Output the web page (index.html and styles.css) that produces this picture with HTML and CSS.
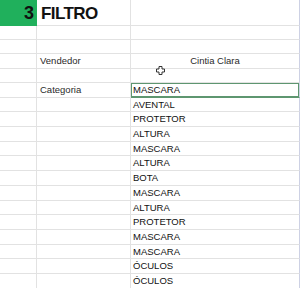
FILE: index.html
```html
<!DOCTYPE html>
<html>
<head>
<meta charset="utf-8">
<link rel="stylesheet" href="styles.css">
</head>
<body>
<div class="sheet">
  <div class="cell title-num">3</div>
  <div class="cell title-text">FILTRO</div>
  <div class="cell"></div>

  <div class="cell r14"></div><div class="cell r14"></div><div class="cell r14"></div>
  <div class="cell r14"></div><div class="cell r14"></div><div class="cell r14"></div>
  <div class="cell r15"></div><div class="cell r15 label">Vendedor</div><div class="cell r15 center">Cintia Clara</div>
  <div class="cell r14"></div><div class="cell r14"></div><div class="cell r14"></div>

  <div class="cell row"></div><div class="cell row label">Categoria</div><div class="cell row item sel">MASCARA</div>
  <div class="cell row"></div><div class="cell row"></div><div class="cell row item">AVENTAL</div>
  <div class="cell row"></div><div class="cell row"></div><div class="cell row item">PROTETOR</div>
  <div class="cell row"></div><div class="cell row"></div><div class="cell row item">ALTURA</div>
  <div class="cell row"></div><div class="cell row"></div><div class="cell row item">MASCARA</div>
  <div class="cell row"></div><div class="cell row"></div><div class="cell row item">ALTURA</div>
  <div class="cell row"></div><div class="cell row"></div><div class="cell row item">BOTA</div>
  <div class="cell row"></div><div class="cell row"></div><div class="cell row item">MASCARA</div>
  <div class="cell row"></div><div class="cell row"></div><div class="cell row item">ALTURA</div>
  <div class="cell row"></div><div class="cell row"></div><div class="cell row item">PROTETOR</div>
  <div class="cell row"></div><div class="cell row"></div><div class="cell row item">MASCARA</div>
  <div class="cell row"></div><div class="cell row"></div><div class="cell row item">MASCARA</div>
  <div class="cell row"></div><div class="cell row"></div><div class="cell row item">ÓCULOS</div>
  <div class="cell row"></div><div class="cell row"></div><div class="cell row item">ÓCULOS</div>

  <svg class="cursor" width="9" height="9" viewBox="0 0 9 9">
    <path d="M3 0.5h3v2.5h2.5v3H6v2.5H3V6H0.5V3H3z" fill="#fff" stroke="#333" stroke-width="1"/>
  </svg>
</div>
</body>
</html>
```

FILE: styles.css
```css
html, body {
  margin: 0;
  padding: 0;
  background: #fff;
  overflow: hidden;
}
.sheet {
  position: relative;
  display: grid;
  grid-template-columns: 37px 94px 169px;
  grid-auto-rows: auto;
  width: 300px;
  height: 288px;
  overflow: hidden;
  font-family: "Liberation Sans", Arial, sans-serif;
  font-size: 9.5px;
  color: #222;
}
.cell {
  box-sizing: border-box;
  border-right: 1px solid #e2e2e2;
  border-bottom: 1px solid #e2e2e2;
  white-space: nowrap;
  overflow: visible;
}
.cell:nth-child(3n) {
  border-right-color: #cdd1e4;
}
.title-num {
  height: 26px;
  background: #20b05c;
  border-right-color: #20b05c;
  border-bottom-color: #20b05c;
  text-align: right;
  font-weight: bold;
  font-size: 18px;
  line-height: 27px;
  color: #111;
  padding-right: 2px;
}
.title-text {
  height: 26px;
  font-weight: bold;
  font-size: 17px;
  letter-spacing: -0.6px;
  line-height: 27px;
  color: #111;
  padding-left: 4px;
}
.r14 { height: 14px; }
.r15 { height: 15px; }
.row { height: 14.7px; }
.label, .item {
  padding-left: 3px;
  line-height: 14px;
  color: #2a2a2a;
}
.item { color: #111; padding-left: 2px; }
.center {
  text-align: center;
  line-height: 14px;
  color: #2a2a2a;
}
.sel {
  box-shadow: inset 0 0 0 1px #5e9670;
  border-bottom-color: #5e9670;
}
.cursor {
  position: absolute;
  left: 156px;
  top: 66px;
}
```
